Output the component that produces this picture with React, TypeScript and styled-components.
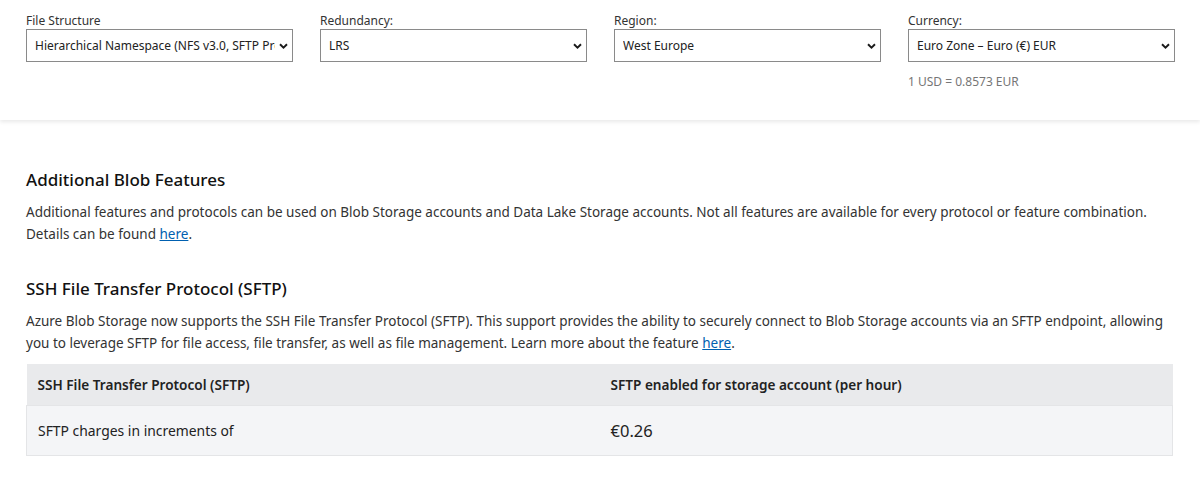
import React from 'react';
import styled, { createGlobalStyle } from 'styled-components';

const GlobalStyle = createGlobalStyle`
  html, body {
    margin: 0;
    padding: 0;
    background: #ffffff;
  }
  body {
    font-family: "Noto Sans", "Open Sans", "Liberation Sans", sans-serif;
    color: #333333;
  }
  * {
    box-sizing: border-box;
  }
`;

interface FilterProps {
  label: string,
  value: string,
  options: string[],
  note?: string,
}

const filters: FilterProps[] = [
  {
    label: 'File Structure',
    value: 'Hierarchical Namespace (NFS v3.0, SFTP Protocol)',
    options: ['Flat Namespace', 'Hierarchical Namespace (NFS v3.0, SFTP Protocol)'],
  },
  { label: 'Redundancy:', value: 'LRS', options: ['LRS', 'ZRS', 'GRS', 'RA-GRS'] },
  { label: 'Region:', value: 'West Europe', options: ['West Europe', 'North Europe', 'East US'] },
  {
    label: 'Currency:',
    value: 'Euro Zone – Euro (€) EUR',
    options: ['United States – Dollar ($) USD', 'Euro Zone – Euro (€) EUR'],
    note: '1 USD = 0.8573 EUR',
  },
];

const Chevron = () => (
  <svg width="9" height="6" viewBox="0 0 9 6" aria-hidden="true">
    <path d="M1 1.2 L4.5 4.6 L8 1.2" fill="none" stroke="#1a1a1a" strokeWidth="1.9" />
  </svg>
);

const Filter: React.FC<FilterProps> = ({ label, value, options, note }) => (
  <StyledField>
    <StyledLabel>{label}</StyledLabel>
    <StyledSelectWrap>
      <StyledSelect defaultValue={value}>
        {options.map((item) => (
          <option key={item} value={item}>{item}</option>
        ))}
      </StyledSelect>
      <StyledArrow><Chevron /></StyledArrow>
    </StyledSelectWrap>
    {note && <StyledNote>{note}</StyledNote>}
  </StyledField>
);

const App: React.FC = () => (
  <>
    <GlobalStyle />
    <StyledTopBar>
      <StyledFilterGrid>
        {filters.map((f) => <Filter key={f.label} {...f} />)}
      </StyledFilterGrid>
    </StyledTopBar>
    <StyledContent>
      <StyledTitle>Additional Blob Features</StyledTitle>
      <StyledText>
        Additional features and protocols can be used on Blob Storage accounts and Data Lake Storage accounts. Not all features are available for every protocol or feature combination. Details can be found <StyledLink href="#">here</StyledLink>.
      </StyledText>
      <StyledTitle $spaced>SSH File Transfer Protocol (SFTP)</StyledTitle>
      <StyledText>
        Azure Blob Storage now supports the SSH File Transfer Protocol (SFTP). This support provides the ability to securely connect to Blob Storage accounts via an SFTP endpoint, allowing you to leverage SFTP for file access, file transfer, as well as file management. Learn more about the feature <StyledLink href="#">here</StyledLink>.
      </StyledText>
      <StyledTable>
        <thead>
          <tr>
            <StyledHeadCell>SSH File Transfer Protocol (SFTP)</StyledHeadCell>
            <StyledHeadCell>SFTP enabled for storage account (per hour)</StyledHeadCell>
          </tr>
        </thead>
        <tbody>
          <tr>
            <StyledCell>SFTP charges in increments of</StyledCell>
            <StyledCell $price>€0.26</StyledCell>
          </tr>
        </tbody>
      </StyledTable>
    </StyledContent>
  </>
);

const StyledTopBar = styled.header`
  height: 120px;
  padding: 12px 25px 0 26px;
  background: #ffffff;
  box-shadow: 0 2px 4px rgba(0, 0, 0, 0.09);
  position: relative;
`;

const StyledFilterGrid = styled.div`
  display: grid;
  grid-template-columns: repeat(4, 267px);
  column-gap: 27px;
`;

const StyledField = styled.div`
  display: flex;
  flex-direction: column;
`;

const StyledLabel = styled.label`
  font-size: 12px;
  line-height: 17px;
  color: #333333;
`;

const StyledSelectWrap = styled.div`
  position: relative;
  height: 33px;
`;

const StyledSelect = styled.select`
  appearance: none;
  width: 100%;
  height: 100%;
  margin: 0;
  padding: 0 17px 0 8px;
  border: 1px solid #8a8a8a;
  border-radius: 0;
  background: #ffffff;
  font-family: inherit;
  font-size: 12px;
  color: #222222;
  outline: none;
  cursor: pointer;
`;

const StyledArrow = styled.span`
  position: absolute;
  right: 5px;
  top: 14px;
  display: flex;
  pointer-events: none;
`;

const StyledNote = styled.div`
  margin-top: 11px;
  font-size: 12px;
  line-height: 17px;
  color: #767676;
`;

const StyledContent = styled.main`
  padding: 48px 26px 0 26px;
`;

const StyledTitle = styled.h2<{ $spaced?: boolean }>`
  margin: ${(p) => (p.$spaced ? '32px' : '0')} 0 9px 0;
  font-size: 17px;
  line-height: 24px;
  font-weight: 500;
  color: #111111;
`;

const StyledText = styled.p`
  margin: 0;
  font-size: 13.5px;
  line-height: 22px;
  color: #333333;
`;

const StyledLink = styled.a`
  color: #0060b0;
  text-decoration: underline;
`;

const StyledTable = styled.table`
  width: 1147px;
  margin-top: 10px;
  border-collapse: collapse;
  table-layout: fixed;
`;

const StyledHeadCell = styled.th`
  width: 50%;
  height: 41px;
  padding: 0 11px;
  background: #e9eaec;
  text-align: left;
  font-size: 13.6px;
  font-weight: 600;
  color: #222222;
`;

const StyledCell = styled.td<{ $price?: boolean }>`
  height: 50px;
  padding: 0 11px;
  background: #f4f5f7;
  border: 1px solid #e4e5e7;
  border-left: none;
  border-right: none;
  font-size: ${(p) => (p.$price ? '16.5px' : '13.9px')};
  color: #222222;

  &:first-child {
    border-left: 1px solid #e4e5e7;
  }
  &:last-child {
    border-right: 1px solid #e4e5e7;
  }
`;

export default App;
